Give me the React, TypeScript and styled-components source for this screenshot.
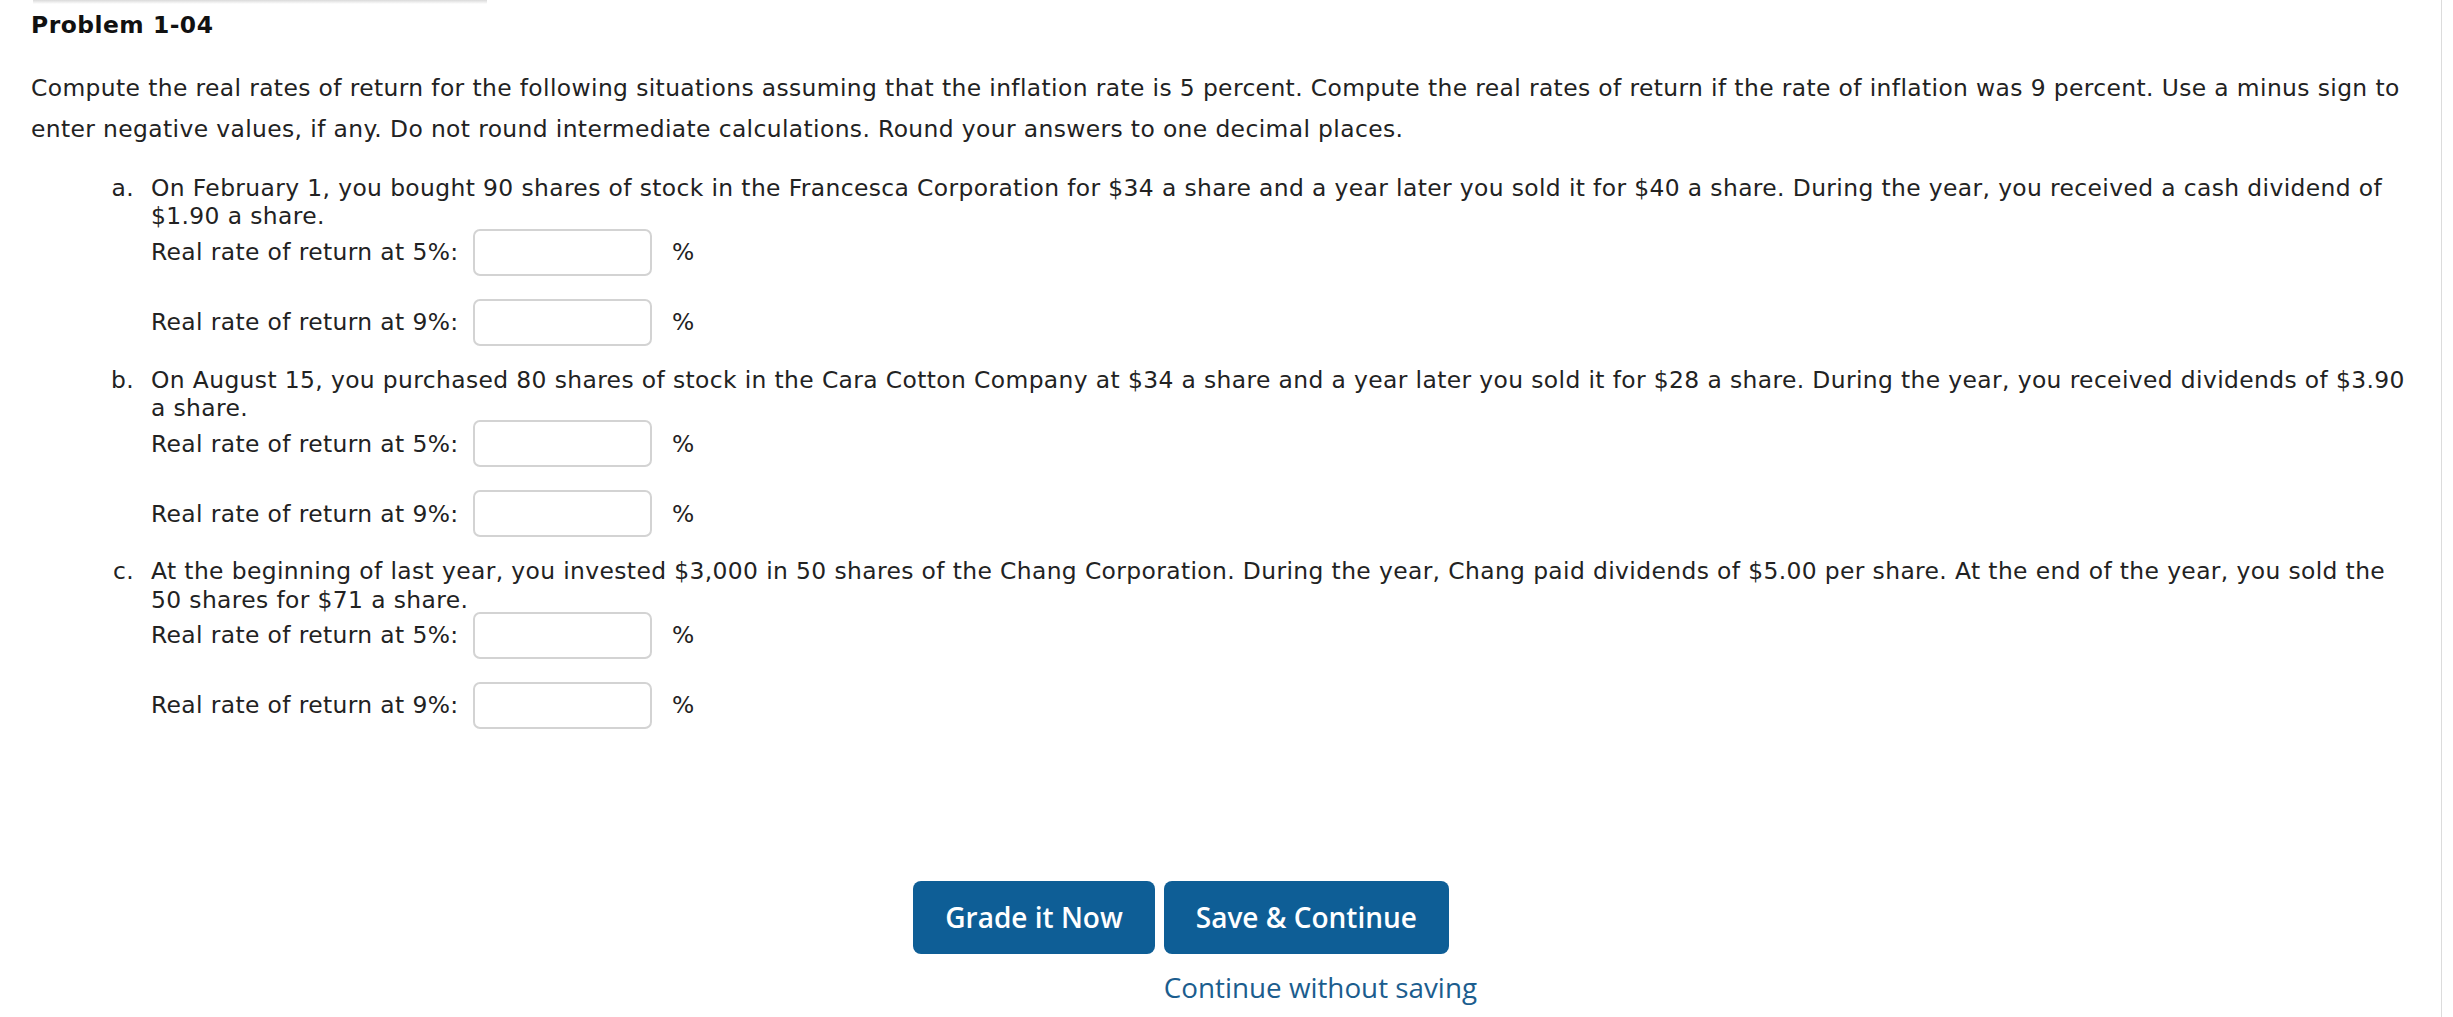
import styled, { createGlobalStyle } from 'styled-components';

const GlobalStyle = createGlobalStyle`
  html, body {
    margin: 0;
    padding: 0;
    background: #ffffff;
  }
  body {
    font-family: Verdana, 'DejaVu Sans', sans-serif;
    color: #222222;
  }
`;

type Item = {
  marker: string;
  text: string;
};

const items: Item[] = [
  {
    marker: 'a.',
    text: 'On February 1, you bought 90 shares of stock in the Francesca Corporation for $34 a share and a year later you sold it for $40 a share. During the year, you received a cash dividend of $1.90 a share.',
  },
  {
    marker: 'b.',
    text: 'On August 15, you purchased 80 shares of stock in the Cara Cotton Company at $34 a share and a year later you sold it for $28 a share. During the year, you received dividends of $3.90 a share.',
  },
  {
    marker: 'c.',
    text: 'At the beginning of last year, you invested $3,000 in 50 shares of the Chang Corporation. During the year, Chang paid dividends of $5.00 per share. At the end of the year, you sold the 50 shares for $71 a share.',
  },
];

const rates = ['5%', '9%'];

export default function App() {
  return (
    <>
      <GlobalStyle />
      <Panel>
        <TabEdge />
        <Title>Problem 1-04</Title>
        <Intro>
          Compute the real rates of return for the following situations
          assuming that the inflation rate is 5 percent. Compute the real rates
          of return if the rate of inflation was 9 percent. Use a minus sign to
          enter negative values, if any. Do not round intermediate
          calculations. Round your answers to one decimal places.
        </Intro>
        <ItemList>
          {items.map((item) => (
            <ItemRow key={item.marker}>
              <Marker>{item.marker}</Marker>
              <ItemBody>
                <ItemText>{item.text}</ItemText>
                <AnswerRows>
                  {rates.map((rate) => (
                    <AnswerRow key={rate}>
                      <AnswerLabel>Real rate of return at {rate}:</AnswerLabel>
                      <AnswerInput type='text' aria-label={`Real rate of return at ${rate}`} />
                      <Unit>%</Unit>
                    </AnswerRow>
                  ))}
                </AnswerRows>
              </ItemBody>
            </ItemRow>
          ))}
        </ItemList>
        <Footer>
          <PrimaryButton type='button'>Grade it Now</PrimaryButton>
          <SaveColumn>
            <PrimaryButton type='button'>Save &amp; Continue</PrimaryButton>
            <SkipLink href='#'>Continue without saving</SkipLink>
          </SaveColumn>
        </Footer>
      </Panel>
    </>
  );
}

const Panel = styled.main`
  box-sizing: border-box;
  width: 2442px;
  min-height: 100vh;
  padding: 0 26px 20px 31px;
  border-right: 1px solid #dcdcdc;
  font-size: 23.4px;
  letter-spacing: 0.38px;
`;

const TabEdge = styled.div`
  width: 454px;
  height: 4px;
  margin-left: 2px;
  background: linear-gradient(to bottom, #dadada, #ffffff);
`;

const Title = styled.h1`
  margin: 7px 0 0;
  font-size: 23.4px;
  line-height: 28px;
  font-weight: bold;
  letter-spacing: 0.5px;
  color: #111111;
`;

const Intro = styled.p`
  margin: 29px 0 0;
  line-height: 40.6px;
`;

const ItemList = styled.ol`
  list-style: none;
  margin: 25px 0 0 80px;
  padding: 0;
  display: flex;
  flex-direction: column;
  gap: 20px;
`;

const ItemRow = styled.li`
  display: grid;
  grid-template-columns: 40px 1fr;
  line-height: 28.3px;
`;

const Marker = styled.span`
  text-align: right;
  padding-right: 17px;
`;

const ItemBody = styled.div`
  display: flex;
  flex-direction: column;
`;

const ItemText = styled.div``;

const AnswerRows = styled.div`
  display: flex;
  flex-direction: column;
  gap: 23px;
  margin-top: -2px;
`;

const AnswerRow = styled.div`
  display: flex;
  align-items: center;
  height: 47px;
`;

const AnswerLabel = styled.label`
  width: 322px;
  flex-shrink: 0;
`;

const AnswerInput = styled.input`
  box-sizing: border-box;
  width: 179px;
  height: 47px;
  border: 2px solid #d3d3d3;
  border-radius: 7px;
  background: #ffffff;
  font: inherit;
  padding: 0 8px;
`;

const Unit = styled.span`
  margin-left: 20px;
`;

const Footer = styled.div`
  display: flex;
  justify-content: center;
  align-items: flex-start;
  gap: 9px;
  margin-top: 152px;
  padding-right: 54px;
  letter-spacing: normal;
`;

const SaveColumn = styled.div`
  display: flex;
  flex-direction: column;
  align-items: flex-start;
  width: 315px;
`;

const PrimaryButton = styled.button`
  height: 73px;
  padding: 0 32px;
  border: none;
  border-radius: 8px;
  background: #0e5e96;
  color: #ffffff;
  font-family: 'Open Sans', sans-serif;
  font-size: 28px;
  font-weight: 600;
  cursor: pointer;
`;

const SkipLink = styled.a`
  margin-top: 14px;
  font-family: 'Open Sans', sans-serif;
  font-size: 27.8px;
  line-height: 38px;
  white-space: nowrap;
  color: #1b5d8e;
  text-decoration: none;
`;
